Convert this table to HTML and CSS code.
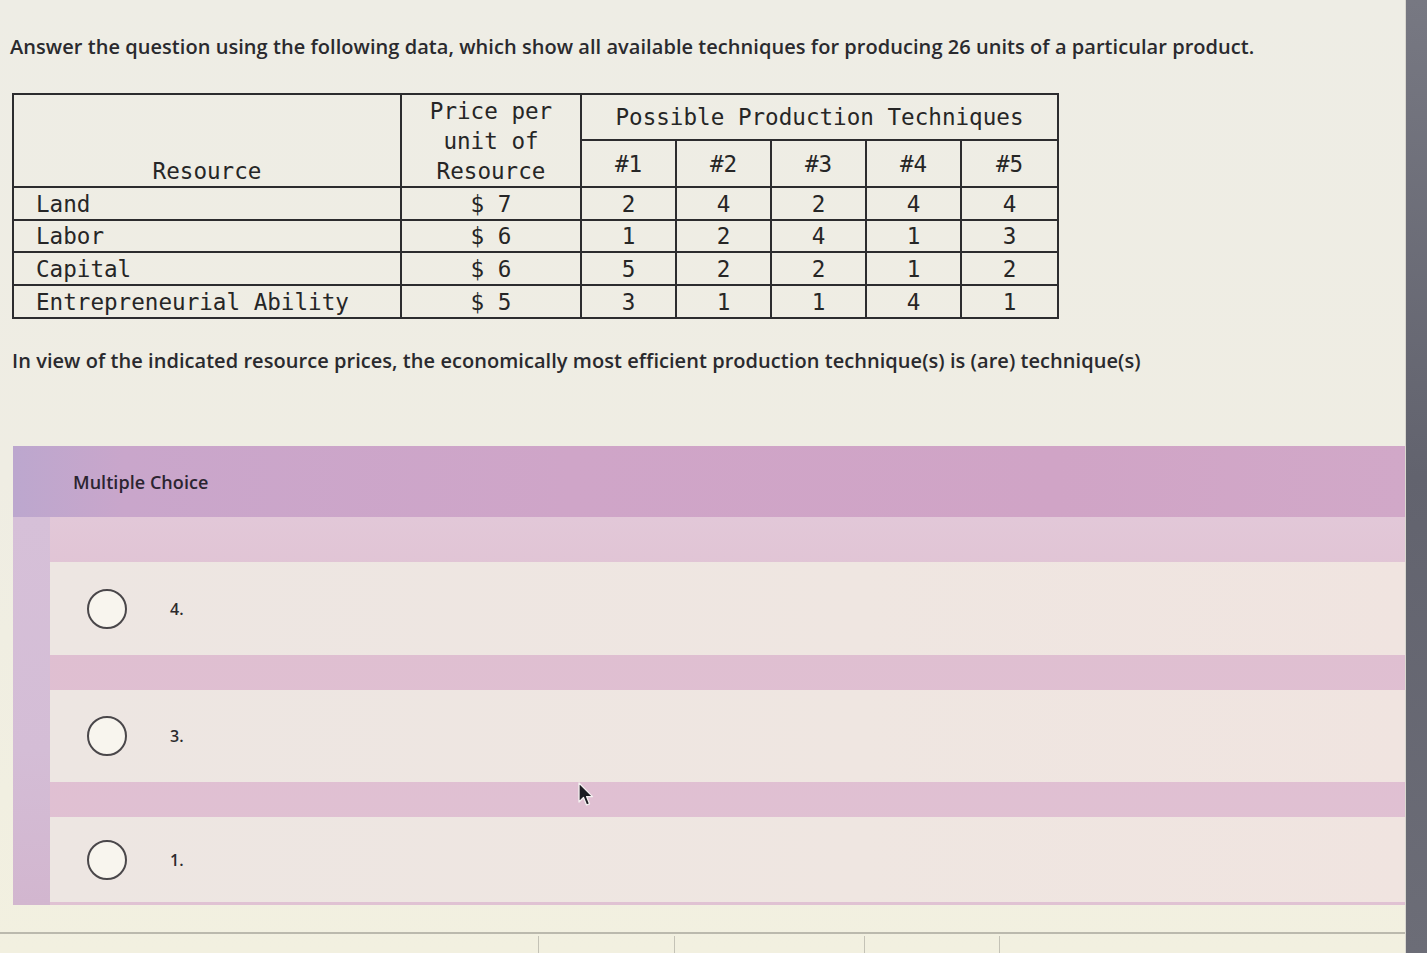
FILE: index.html
```html
<!DOCTYPE html>
<html lang="en">
<head>
<meta charset="utf-8">
<title>Multiple Choice Question</title>
<link rel="stylesheet" href="styles.css">
</head>
<body>
<div class="screen">
  <main class="page">
    <p class="prompt prompt-top">Answer the question using the following data, which show all available techniques for producing 26 units of a particular product.</p>

    <table class="data">
      <colgroup>
        <col class="c-res">
        <col class="c-price">
        <col class="c-t">
        <col class="c-t">
        <col class="c-t">
        <col class="c-t">
        <col class="c-t5">
      </colgroup>
      <thead>
        <tr class="h1">
          <th rowspan="2" class="res-head">Resource</th>
          <th rowspan="2" class="price-head">Price per<br>unit of<br>Resource</th>
          <th colspan="5">Possible Production Techniques</th>
        </tr>
        <tr class="h2">
          <th>#1</th><th>#2</th><th>#3</th><th>#4</th><th>#5</th>
        </tr>
      </thead>
      <tbody>
        <tr class="r1"><td class="name">Land</td><td>$ 7</td><td>2</td><td>4</td><td>2</td><td>4</td><td>4</td></tr>
        <tr class="r2"><td class="name">Labor</td><td>$ 6</td><td>1</td><td>2</td><td>4</td><td>1</td><td>3</td></tr>
        <tr class="r3"><td class="name">Capital</td><td>$ 6</td><td>5</td><td>2</td><td>2</td><td>1</td><td>2</td></tr>
        <tr class="r4"><td class="name">Entrepreneurial Ability</td><td>$ 5</td><td>3</td><td>1</td><td>1</td><td>4</td><td>1</td></tr>
      </tbody>
    </table>

    <p class="prompt prompt-q">In view of the indicated resource prices, the economically most efficient production technique(s) is (are) technique(s)</p>

    <section class="mc">
      <div class="mc-header">Multiple Choice</div>
      <div class="mc-body">
        <div class="mc-strip"></div>
        <div class="mc-options">
          <label class="option opt-a"><span class="radio"></span><span class="opt-text">4.</span></label>
          <label class="option opt-b"><span class="radio"></span><span class="opt-text">3.</span></label>
          <label class="option opt-c"><span class="radio"></span><span class="opt-text">1.</span></label>
        </div>
      </div>
      <svg class="cursor" width="18" height="26" viewBox="0 0 18 26"><path d="M2 1 L2 20 L6.5 15.5 L9.5 23 L12.5 21.8 L9.6 14.6 L15.5 14.6 Z" fill="#1c1c22" stroke="#f4f0f0" stroke-width="1.3" stroke-linejoin="round"/></svg>
    </section>

    <footer class="foot">
      <div class="tick t1"></div>
      <div class="tick t2"></div>
      <div class="tick t3"></div>
      <div class="tick t4"></div>
    </footer>
  </main>
  <aside class="side"></aside>
</div>
</body>
</html>
```

FILE: styles.css
```css
html, body {
  margin: 0;
  padding: 0;
}
body {
  background: #eeece3;
  width: 1427px;
  height: 953px;
  overflow: hidden;
}
.screen {
  display: flex;
  height: 953px;
}
.page {
  flex: 1;
  display: flex;
  flex-direction: column;
  background: linear-gradient(180deg, #eeede5 0%, #efede3 50%, #f2f0e0 100%);
  padding-top: 35px;
}
.side {
  width: 21px;
  background: linear-gradient(180deg, #777882 0%, #62636e 50%, #6c6d77 100%);
  border-left: 1px solid #d9d7cf;
}

.prompt {
  margin: 0;
  font-family: "Open Sans", "Lato", sans-serif;
  font-weight: 600;
  font-size: 20px;
  line-height: 24px;
  color: #2a2a2e;
  white-space: nowrap;
  letter-spacing: 0.05px;
}
.prompt-top {
  margin-left: 10px;
}
.prompt-q {
  margin-left: 12px;
  margin-top: 30px;
}

/* data table */
.data {
  margin-left: 12px;
  margin-top: 34px;
  border-collapse: collapse;
  table-layout: fixed;
  width: 1045px;
  font-family: "DejaVu Sans Mono", "Liberation Mono", monospace;
  font-size: 22.6px;
  color: #262626;
}
.c-res { width: 388px; }
.c-price { width: 180px; }
.c-t { width: 95px; }
.c-t5 { width: 97px; }
.data th, .data td {
  border: 2px solid #2c2c2e;
  padding: 0;
  font-weight: normal;
  text-align: center;
  line-height: 28px;
}
.data .h1 th { height: 44px; }
.data .h2 th { height: 45px; }
.data .res-head {
  vertical-align: bottom;
  padding-bottom: 1px;
}
.data .price-head {
  line-height: 30px;
  vertical-align: middle;
}
.data td { height: 31px; }
.data .r2 td { height: 30px; }
.data td.name {
  text-align: left;
  padding-left: 22px;
}

/* multiple choice */
.mc {
  position: relative;
  margin-left: 13px;
  margin-top: 73px;
  display: flex;
  flex-direction: column;
}
.mc-header {
  height: 71px;
  display: flex;
  align-items: center;
  padding-left: 60px;
  font-family: "Open Sans", "Lato", sans-serif;
  font-weight: 600;
  font-size: 18px;
  letter-spacing: 0.05px;
  color: #2b2430;
  background: linear-gradient(90deg, #bca7ce 0%, #c9a6cb 8%, #cfa5c8 40%, #d0a4c6 75%, #d1a8c8 100%);
}
.mc-body {
  display: flex;
}
.mc-strip {
  width: 37px;
  background: linear-gradient(180deg, #d6c0d8 0%, #d4bdd6 60%, #d2b6cf 100%);
}
.mc-options {
  flex: 1;
  display: flex;
  flex-direction: column;
  gap: 35px;
  padding-top: 45px;
  padding-bottom: 3px;
  background: linear-gradient(180deg, #e2c8d8 0%, #dfbfd1 30%, #e0bfd2 60%, #e0c2d3 100%);
}
.option {
  display: flex;
  align-items: center;
  background: linear-gradient(90deg, #ede6e2 0%, #efe6e1 60%, #f0e4e0 100%);
}
.opt-a { height: 93px; }
.opt-b { height: 92px; }
.opt-c { height: 85px; }
.radio {
  width: 36px;
  height: 36px;
  margin-left: 37px;
  border: 2px solid #4a474a;
  border-radius: 50%;
  background: #f8f5ee;
}
.opt-text {
  margin-left: 43px;
  font-family: "Open Sans", "Lato", sans-serif;
  font-weight: 600;
  font-size: 16px;
  color: #2c2a2d;
}
.cursor {
  position: absolute;
  left: 564px;
  top: 336px;
}

/* footer */
.foot {
  position: relative;
  margin-top: 27px;
  flex: 1;
  border-top: 2px solid #bbb9ad;
}
.tick {
  position: absolute;
  top: 2px;
  bottom: 0;
  width: 1px;
  background: #c4c2b6;
}
.t1 { left: 538px; }
.t2 { left: 674px; }
.t3 { left: 864px; }
.t4 { left: 999px; }
```
